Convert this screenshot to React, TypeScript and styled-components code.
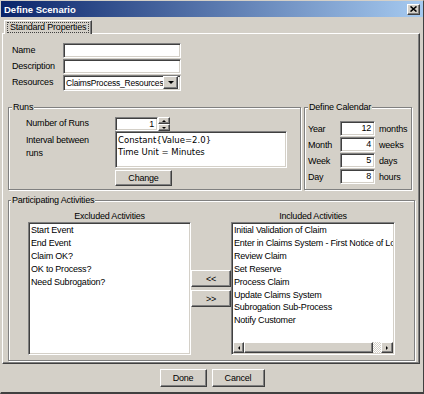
import { Fragment } from "react";
import styled, { createGlobalStyle, css } from "styled-components";

const GlobalStyle = createGlobalStyle`
  html, body {
    margin: 0;
    padding: 0;
    background: #d4d0c8;
  }
  body {
    font-family: "Liberation Sans", Arial, sans-serif;
    font-size: 9px;
    letter-spacing: -0.2px;
    color: #000;
  }
`;

const raised = css`
  background: #d4d0c8;
  box-sizing: border-box;
  border-top: 1px solid #fff;
  border-left: 1px solid #fff;
  border-right: 1px solid #404040;
  border-bottom: 1px solid #404040;
  box-shadow: inset -1px -1px 0 #808080;
`;

const sunken = css`
  background: #fff;
  box-sizing: border-box;
  border-top: 1px solid #808080;
  border-left: 1px solid #808080;
  border-right: 1px solid #fff;
  border-bottom: 1px solid #fff;
  box-shadow: inset 1px 1px 0 #404040, inset -1px -1px 0 #d4d0c8;
`;

const Window = styled.div`
  width: 424px;
  height: 394px;
  box-sizing: border-box;
  background: #d4d0c8;
  border-top: 1px solid #d4d0c8;
  border-left: 1px solid #d4d0c8;
  border-right: 1px solid #404040;
  border-bottom: 2px solid #404040;
  display: flex;
  flex-direction: column;
`;

const TitleBar = styled.div`
  height: 16px;
  flex: none;
  display: flex;
  align-items: center;
  justify-content: space-between;
  padding: 0 3px 0 3px;
  background: linear-gradient(to right, #0a246a, #a6caf0);
`;

const TitleText = styled.span`
  color: #fff;
  font-weight: bold;
  font-size: 9.5px;
  letter-spacing: 0;
`;

const CloseButton = styled.div`
  ${raised};
  width: 13px;
  height: 11px;
  display: flex;
  align-items: center;
  justify-content: center;
`;

const Body = styled.div`
  padding: 0 3px 0 1px;
`;

const TabStrip = styled.div`
  display: flex;
  padding: 3px 0 0 2px;
  height: 14px;
  margin-bottom: -1px;
  position: relative;
  z-index: 1;
`;

const Tab = styled.div`
  height: 14px;
  box-sizing: border-box;
  background: #d4d0c8;
  border-top: 1px solid #fff;
  border-left: 1px solid #fff;
  border-right: 1px solid #404040;
  box-shadow: inset -1px 0 0 #808080;
  padding: 1px 2px 0 2px;
`;

const TabLabel = styled.span`
  display: block;
  border: 1px dotted #404040;
  line-height: 9px;
  padding: 0 2px;
`;

const TabPanel = styled.div`
  height: 331px;
  box-sizing: border-box;
  border-top: 1px solid #fff;
  border-left: 1px solid #fff;
  border-right: 1px solid #404040;
  border-bottom: 1px solid #404040;
  box-shadow: inset -1px -1px 0 #808080;
  padding: 9px 4px 2px 5px;
  display: flex;
  flex-direction: column;
`;

const FieldGrid = styled.div`
  display: grid;
  grid-template-columns: 51px 118px;
  grid-auto-rows: 15px;
  row-gap: 1px;
  align-items: center;
  margin-left: 4px;
`;

const FieldLabel = styled.span`
  line-height: 15px;
`;

const TextField = styled.div`
  ${sunken};
  height: 15px;
`;

const ComboField = styled.div`
  ${sunken};
  height: 16px;
  display: flex;
  align-items: center;
  justify-content: space-between;
  padding: 1px 2px 1px 1px;
`;

const ComboText = styled.span`
  padding-left: 1px;
  font-size: 8.5px;
  letter-spacing: -0.2px;
  white-space: nowrap;
`;

const DropButton = styled.div`
  ${raised};
  flex: none;
  width: 15px;
  height: 13px;
  display: flex;
  align-items: center;
  justify-content: center;
`;

const GroupRow = styled.div`
  display: flex;
  gap: 3px;
  margin-top: 12px;
`;

const GroupBox = styled.fieldset<{ $w?: number; $h: number; $pad: string; $gapTop?: number }>`
  margin: ${(p) => p.$gapTop ?? 0}px 0 0 0;
  min-width: 0;
  box-sizing: border-box;
  width: ${(p) => (p.$w ? `${p.$w}px` : "auto")};
  height: ${(p) => p.$h}px;
  border: 1px solid #808080;
  box-shadow: inset 1px 1px 0 #fff, 1px 1px 0 #fff;
  padding: ${(p) => p.$pad};
`;

const GroupTitle = styled.legend`
  padding: 0 1px;
  line-height: 11px;
  background: #d4d0c8;
`;

const RunsGrid = styled.div`
  display: grid;
  grid-template-columns: 89px auto;
  grid-template-rows: 14px 37px auto;
  margin-left: 14px;
`;

const RowLabel = styled.span<{ $top?: number }>`
  padding-top: ${(p) => p.$top ?? 0}px;
  max-width: 72px;
  line-height: 13px;
`;

const Spinner = styled.div`
  display: flex;
  width: 55px;
  height: 14px;
`;

const SpinInput = styled.div`
  ${sunken};
  flex: 1;
  text-align: right;
  padding-right: 3px;
  line-height: 12px;
`;

const SpinButtons = styled.div`
  width: 12px;
  display: flex;
  flex-direction: column;
`;

const SpinButton = styled.div`
  ${raised};
  flex: 1;
  display: flex;
  align-items: center;
  justify-content: center;
`;

const MemoBox = styled.div`
  ${sunken};
  width: 172px;
  height: 37px;
  padding: 2px 2px;
  font-family: "DejaVu Sans", Verdana, sans-serif;
  font-size: 8.5px;
  letter-spacing: 0;
  line-height: 12px;
  white-space: nowrap;
  overflow: hidden;
`;

const PushButton = styled.div<{ $w: number; $h: number }>`
  ${raised};
  width: ${(p) => p.$w}px;
  height: ${(p) => p.$h}px;
  display: flex;
  align-items: center;
  justify-content: center;
`;

const ButtonCell = styled.div`
  margin-top: 2px;
`;

const CalendarGrid = styled.div`
  display: grid;
  grid-template-columns: 32px 35px auto;
  grid-auto-rows: 15px;
  row-gap: 1px;
  align-items: center;
`;

const CalInput = styled.div`
  ${sunken};
  height: 15px;
  text-align: right;
  padding-right: 3px;
  line-height: 13px;
`;

const CalUnit = styled.span`
  padding-left: 4px;
  white-space: nowrap;
`;

const ActivitiesGrid = styled.div`
  display: grid;
  grid-template-columns: 163px 40px 164px;
  grid-template-rows: 12px 133px;
  margin-left: 17px;
`;

const ListHeader = styled.div`
  text-align: center;
  line-height: 12px;
`;

const ListBox = styled.div`
  ${sunken};
  padding: 1px;
  display: flex;
  flex-direction: column;
  overflow: hidden;
`;

const ListItems = styled.div`
  flex: 1;
  padding-left: 1px;
  overflow: hidden;
`;

const ListItem = styled.div`
  line-height: 12.9px;
  white-space: nowrap;
`;

const MoveButtons = styled.div`
  display: flex;
  flex-direction: column;
  justify-content: center;
  gap: 3px;
`;

const HScrollBar = styled.div`
  display: flex;
  height: 11px;
  flex: none;
`;

const ScrollArrow = styled.div<{ $w: number }>`
  ${raised};
  width: ${(p) => p.$w}px;
  display: flex;
  align-items: center;
  justify-content: center;
`;

const ScrollThumb = styled.div`
  ${raised};
  width: 129px;
`;

const ScrollTrack = styled.div`
  flex: 1;
  background: repeating-conic-gradient(#fff 0 25%, #d4d0c8 0 50%) 0 0 / 2px 2px;
`;

const Footer = styled.div`
  display: flex;
  justify-content: center;
  gap: 5px;
  padding-top: 5px;
`;

type Dir = "up" | "down" | "left" | "right";

function Arrow({ dir, w, h }: { dir: Dir; w: number; h: number }) {
  const points = {
    up: `0,${h} ${w},${h} ${w / 2},0`,
    down: `0,0 ${w},0 ${w / 2},${h}`,
    left: `${w},0 ${w},${h} 0,${h / 2}`,
    right: `0,0 0,${h} ${w},${h / 2}`,
  }[dir];
  return (
    <svg width={w} height={h} viewBox={`0 0 ${w} ${h}`}>
      <polygon points={points} fill="#000" />
    </svg>
  );
}

const excluded = ["Start Event", "End Event", "Claim OK?", "OK to Process?", "Need Subrogation?"];

const included = [
  "Initial Validation of Claim",
  "Enter in Claims System - First Notice of Loss",
  "Review Claim",
  "Set Reserve",
  "Process Claim",
  "Update Claims System",
  "Subrogation Sub-Process",
  "Notify Customer",
];

const calendar = [
  { label: "Year", value: 12, unit: "months" },
  { label: "Month", value: 4, unit: "weeks" },
  { label: "Week", value: 5, unit: "days" },
  { label: "Day", value: 8, unit: "hours" },
];

function App() {
  return (
    <>
      <GlobalStyle />
      <Window>
        <TitleBar>
          <TitleText>Define Scenario</TitleText>
          <CloseButton>
            <svg width="7" height="6" viewBox="0 0 7 6">
              <path d="M0.5 0.5 L6.5 5.5 M6.5 0.5 L0.5 5.5" stroke="#000" strokeWidth="1.6" />
            </svg>
          </CloseButton>
        </TitleBar>
        <Body>
          <TabStrip>
            <Tab>
              <TabLabel>Standard Properties</TabLabel>
            </Tab>
          </TabStrip>
          <TabPanel>
            <FieldGrid>
              <FieldLabel>Name</FieldLabel>
              <TextField />
              <FieldLabel>Description</FieldLabel>
              <TextField />
              <FieldLabel>Resources</FieldLabel>
              <ComboField>
                <ComboText>ClaimsProcess_Resources</ComboText>
                <DropButton>
                  <Arrow dir="down" w={6} h={3} />
                </DropButton>
              </ComboField>
            </FieldGrid>

            <GroupRow>
              <GroupBox $w={293} $h={88} $pad="4px 3px 0 3px">
                <GroupTitle>Runs</GroupTitle>
                <RunsGrid>
                  <RowLabel>Number of Runs</RowLabel>
                  <Spinner>
                    <SpinInput>1</SpinInput>
                    <SpinButtons>
                      <SpinButton>
                        <Arrow dir="up" w={4} h={2} />
                      </SpinButton>
                      <SpinButton>
                        <Arrow dir="down" w={4} h={2} />
                      </SpinButton>
                    </SpinButtons>
                  </Spinner>
                  <RowLabel $top={3}>Interval between runs</RowLabel>
                  <MemoBox>
                    Constant{"{"}Value=2.0{"}"}
                    <br />
                    Time Unit = Minutes
                  </MemoBox>
                  <span />
                  <ButtonCell>
                    <PushButton $w={57} $h={16}>Change</PushButton>
                  </ButtonCell>
                </RunsGrid>
              </GroupBox>

              <GroupBox $w={108} $h={88} $pad="8px 3px 0 3px">
                <GroupTitle>Define Calendar</GroupTitle>
                <CalendarGrid>
                  {calendar.map((c) => (
                    <Fragment key={c.label}>
                      <span>{c.label}</span>
                      <CalInput>{c.value}</CalInput>
                      <CalUnit>{c.unit}</CalUnit>
                    </Fragment>
                  ))}
                </CalendarGrid>
              </GroupBox>
            </GroupRow>

            <GroupBox $h={166} $pad="4px 2px 5px 2px" $gapTop={5}>
              <GroupTitle>Participating Activities</GroupTitle>
              <ActivitiesGrid>
                <ListHeader>Excluded Activities</ListHeader>
                <span />
                <ListHeader>Included Activities</ListHeader>
                <ListBox>
                  <ListItems>
                    {excluded.map((a) => (
                      <ListItem key={a}>{a}</ListItem>
                    ))}
                  </ListItems>
                </ListBox>
                <MoveButtons>
                  <PushButton $w={40} $h={17}>&lt;&lt;</PushButton>
                  <PushButton $w={40} $h={17}>&gt;&gt;</PushButton>
                </MoveButtons>
                <ListBox>
                  <ListItems>
                    {included.map((a) => (
                      <ListItem key={a}>{a}</ListItem>
                    ))}
                  </ListItems>
                  <HScrollBar>
                    <ScrollArrow $w={11}>
                      <Arrow dir="left" w={2} h={4} />
                    </ScrollArrow>
                    <ScrollThumb />
                    <ScrollTrack />
                    <ScrollArrow $w={12}>
                      <Arrow dir="right" w={2} h={4} />
                    </ScrollArrow>
                  </HScrollBar>
                </ListBox>
              </ActivitiesGrid>
            </GroupBox>
          </TabPanel>
        </Body>
        <Footer>
          <PushButton $w={47} $h={18}>Done</PushButton>
          <PushButton $w={53} $h={18}>Cancel</PushButton>
        </Footer>
      </Window>
    </>
  );
}

export default App;
